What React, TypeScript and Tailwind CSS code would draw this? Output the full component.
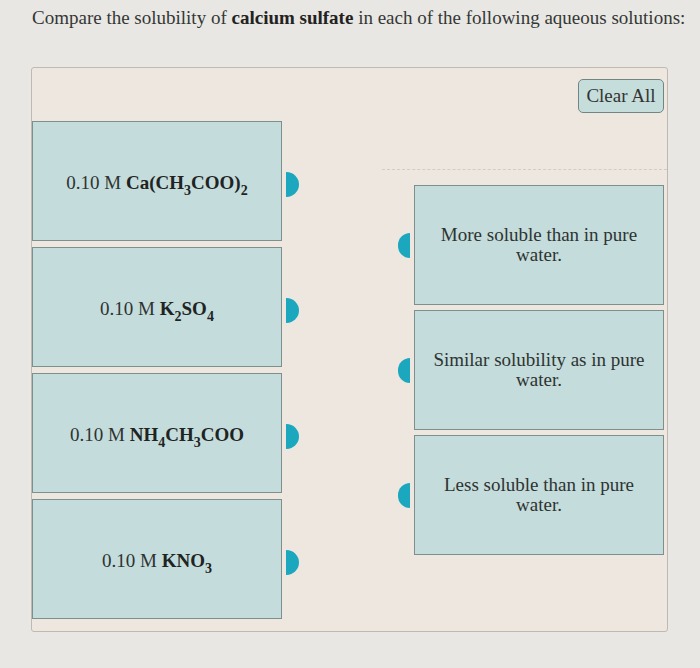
import React from "react"

const serif = { fontFamily: '"Liberation Serif", "Times New Roman", serif' }

type Solution = { id: string; formula: React.ReactNode }

function Sub({ children }: { children: React.ReactNode }) {
  return <sub className="text-[14px] align-[-3px] leading-none">{children}</sub>
}

const solutions: Solution[] = [
  {
    id: "ca",
    formula: (
      <>
        Ca(CH<Sub>3</Sub>COO)<Sub>2</Sub>
      </>
    ),
  },
  {
    id: "k2so4",
    formula: (
      <>
        K<Sub>2</Sub>SO<Sub>4</Sub>
      </>
    ),
  },
  {
    id: "nh4",
    formula: (
      <>
        NH<Sub>4</Sub>CH<Sub>3</Sub>COO
      </>
    ),
  },
  {
    id: "kno3",
    formula: (
      <>
        KNO<Sub>3</Sub>
      </>
    ),
  },
]

const targets = [
  "More soluble than in pure water.",
  "Similar solubility as in pure water.",
  "Less soluble than in pure water.",
]

function SourceCard({ item }: { item: Solution }) {
  return (
    <div className="flex items-center gap-[4px]">
      <div className="w-[250px] h-[120px] flex items-center justify-center bg-[#c4dcdb] border border-[#7d908e] text-[19px] text-[#2e3332]">
        <span className="mt-[4px]">
          0.10 M <b className="font-bold text-[#1f2423]">{item.formula}</b>
        </span>
      </div>
      <div className="w-[13px] h-[25px] mt-[6px] rounded-r-full bg-[#1ba8bf]" />
    </div>
  )
}

function TargetCard({ label }: { label: string }) {
  return (
    <div className="flex items-center gap-[4px]">
      <div className="w-[12px] h-[25px] rounded-l-full bg-[#1ba8bf]" />
      <div className="w-[250px] h-[120px] flex items-center justify-center px-[14px] bg-[#c4dcdb] border border-[#7d908e] text-[19px] leading-[20px] text-center text-[#2e3332]">
        <span>{label}</span>
      </div>
    </div>
  )
}

export default function App() {
  return (
    <div className="w-[700px] h-[668px] bg-[#e9e7e3] pt-[6px] overflow-hidden" style={serif}>
      <h1 className="pl-[32px] text-[19px] leading-[24px] text-[#333736] font-normal">
        Compare the solubility of <b className="font-bold text-[#222]">calcium sulfate</b> in each of the following
        aqueous solutions:
      </h1>

      <div className="ml-[31px] mt-[37px] w-[637px] h-[565px] flex items-start bg-[#eee7df] border border-[#c0b9b0] rounded-[3px]">
        {/* draggable answers */}
        <div className="flex flex-col gap-[6px] mt-[53px]">
          {solutions.map((s) => (
            <SourceCard key={s.id} item={s} />
          ))}
        </div>

        {/* drop targets */}
        <div className="ml-auto mr-[3px] pt-[11px] flex flex-col items-end">
          <button className="w-[86px] h-[34px] rounded-[5px] bg-[#c6dedb] border border-[#718582] text-[19px] text-[#333]">
            Clear All
          </button>
          <div className="w-[285px] mr-[-3px] mt-[56px] border-t border-dashed border-[#d3ccc4]" />
          <div className="flex flex-col gap-[5px] mt-[15px]">
            {targets.map((t) => (
              <TargetCard key={t} label={t} />
            ))}
          </div>
        </div>
      </div>
    </div>
  )
}
